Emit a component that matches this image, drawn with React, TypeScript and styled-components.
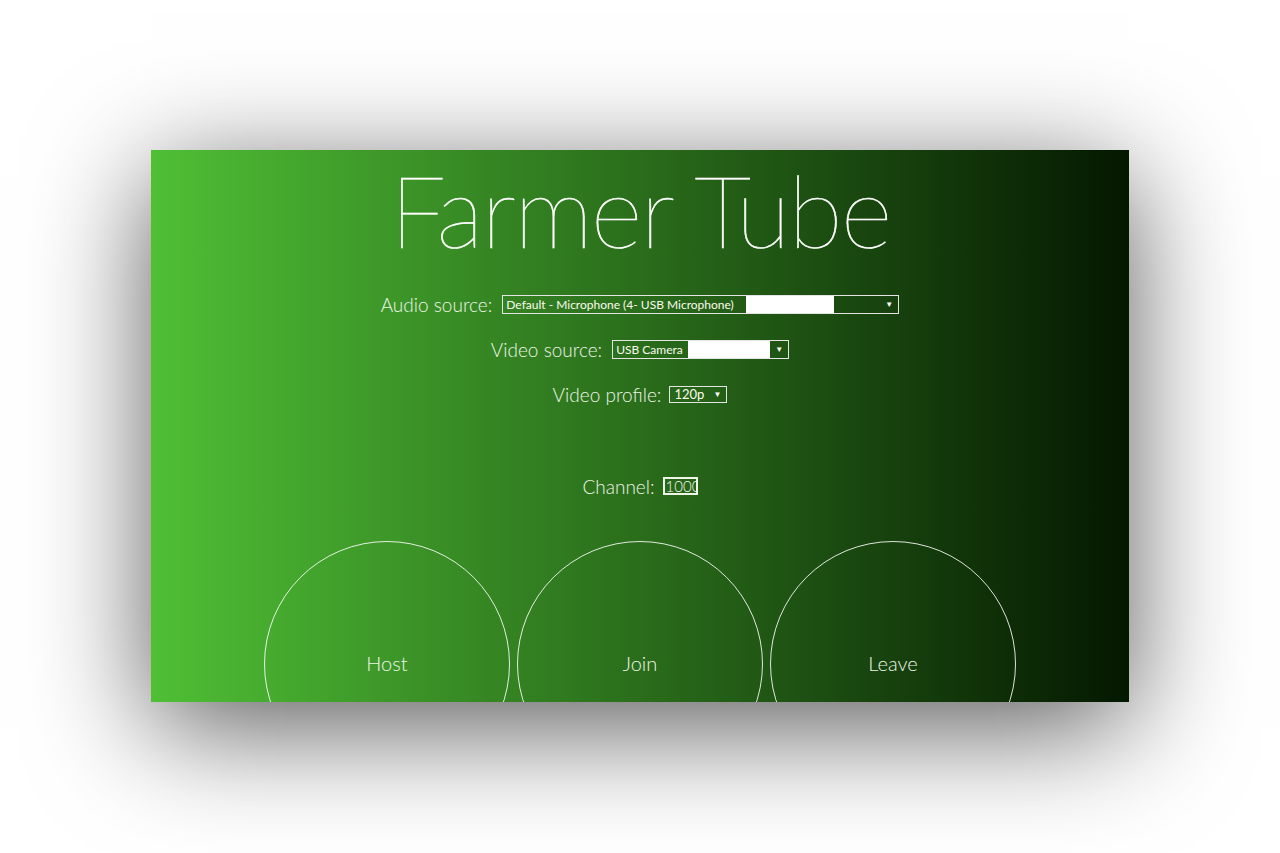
import styled, { createGlobalStyle } from 'styled-components';

const GlobalStyle = createGlobalStyle`
  html, body {
    margin: 0;
    padding: 0;
    background: #fff;
  }
  body {
    font-family: "Lato", "Roboto", "Liberation Sans", sans-serif;
  }
`;

type SourceProps = {
  label: string;
  value: string;
  textWidth: number;
  fillWidth: number;
  restWidth: number;
};

function SourceRow({ label, value, textWidth, fillWidth, restWidth }: SourceProps) {
  return (
    <Row>
      <Label>{label}</Label>
      <SelectBox>
        <SelectText style={{ width: textWidth }}>{value}</SelectText>
        <WhiteFill style={{ width: fillWidth }} />
        <Rest style={{ width: restWidth }} />
        <Arrow>▼</Arrow>
      </SelectBox>
    </Row>
  );
}

function App() {
  return (
    <>
      <GlobalStyle />
      <Page>
        <Card>
          <Title>Farmer Tube</Title>
          <Controls>
            <SourceRow
              label="Audio source:"
              value="Default - Microphone (4- USB Microphone)"
              textWidth={240}
              fillWidth={88}
              restWidth={46}
            />
            <SourceRow
              label="Video source:"
              value="USB Camera"
              textWidth={72}
              fillWidth={82}
              restWidth={0}
            />
            <Row>
              <Label>Video profile:</Label>
              <ProfileBox>
                <span>120p</span>
                <Arrow>▼</Arrow>
              </ProfileBox>
            </Row>
          </Controls>
          <ChannelRow>
            <Label>Channel:</Label>
            <ChannelInput defaultValue="1000" />
          </ChannelRow>
          <Buttons>
            <RoundButton>Host</RoundButton>
            <RoundButton>Join</RoundButton>
            <RoundButton>Leave</RoundButton>
          </Buttons>
        </Card>
      </Page>
    </>
  );
}
export default App;

const Page = styled.div`
  width: 100%;
  height: 853px;
  padding-top: 150px;
  box-sizing: border-box;
  overflow: hidden;
`;

const Card = styled.div`
  width: 978px;
  height: 552px;
  margin: 0 auto;
  background: linear-gradient(to right, #4fbf35 0%, #2a6d1b 50%, #041800 100%);
  box-shadow: 0 25px 110px rgba(0, 0, 0, 0.65);
  overflow: hidden;
  display: flex;
  flex-direction: column;
  align-items: center;
  color: #f2f7ee;
`;

const Title = styled.h1`
  margin: 9px 0 0;
  font-size: 100px;
  font-weight: 100;
  line-height: 100px;
  letter-spacing: -2px;
  color: #fff;
  -webkit-text-stroke: 0.6px #fff;
`;

const Controls = styled.div`
  margin-top: 35px;
  display: flex;
  flex-direction: column;
  align-items: center;
  gap: 25px;
`;

const Row = styled.div`
  display: flex;
  align-items: center;
  gap: 8px;
  height: 20px;
`;

const ChannelRow = styled(Row)`
  margin-top: 72px;
`;

const Label = styled.span`
  font-size: 19px;
  font-weight: 300;
  color: #eef5e8;
`;

const SelectBox = styled.div`
  display: flex;
  align-items: stretch;
  height: 17px;
  margin-left: 2px;
  border: 1px solid #e4e4e4;
  font-size: 12px;
  font-weight: 400;
`;

const SelectText = styled.span`
  display: flex;
  align-items: center;
  padding-left: 3px;
  white-space: nowrap;
  overflow: hidden;
  color: #fbfbee;
`;

const WhiteFill = styled.span`
  background: #fff;
`;

const Rest = styled.span``;

const Arrow = styled.span`
  width: 18px;
  display: flex;
  align-items: center;
  justify-content: center;
  font-size: 8px;
  color: #fff;
`;

const ProfileBox = styled.div`
  display: flex;
  align-items: center;
  height: 17px;
  width: 58px;
  border: 1px solid #e4e4e4;
  font-size: 13px;
  font-weight: 400;
  padding-left: 4px;
  box-sizing: border-box;
  justify-content: space-between;
  color: #fbfbee;
`;

const ChannelInput = styled.input`
  width: 35px;
  height: 18px;
  box-sizing: border-box;
  padding: 0 0 0 1px;
  background: transparent;
  border: 2px solid #eef5e8;
  color: #f4f8ee;
  font-family: inherit;
  font-size: 15px;
  font-weight: 300;
  outline: none;
`;

const Buttons = styled.div`
  margin-top: 45px;
  display: flex;
  gap: 7px;
`;

const RoundButton = styled.button`
  width: 246px;
  height: 246px;
  flex-shrink: 0;
  border-radius: 50%;
  border: 1px solid rgba(255, 255, 255, 0.85);
  background: transparent;
  color: #eef5e8;
  font-family: inherit;
  font-size: 20px;
  font-weight: 300;
  padding-bottom: 4px;
  cursor: pointer;
`;
